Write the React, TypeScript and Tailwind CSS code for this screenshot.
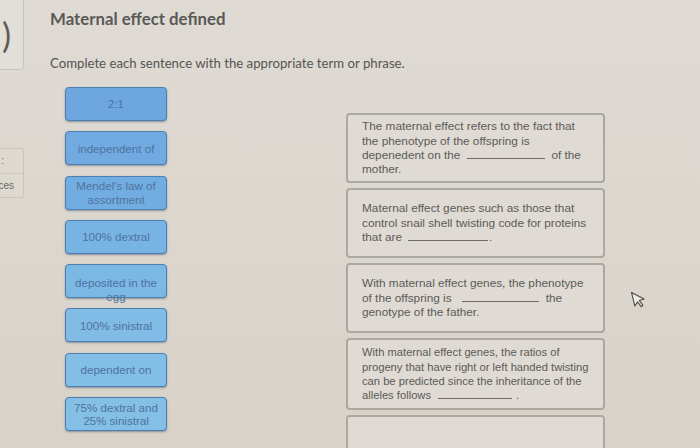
import React from "react";

const choices: { label: string; cls: string }[] = [
  { label: "2:1", cls: "bg-[#6ea7e0] items-center" },
  { label: "independent of", cls: "bg-[#70aae0] items-center" },
  { label: "Mendel's law of assortment", cls: "bg-[#72ade1] items-center" },
  { label: "100% dextral", cls: "bg-[#78b4e3] items-center" },
  { label: "deposited in the egg", cls: "bg-[#7cb8e4] items-start pt-[11px]" },
  { label: "100% sinistral", cls: "bg-[#80bce5] items-center" },
  { label: "dependent on", cls: "bg-[#82bee5] items-center" },
  { label: "75% dextral and 25% sinistral", cls: "bg-[#84bfe5] items-center" },
];

function Blank({ cls }: { cls: string }) {
  return <span className={`inline-block h-[10px] border-b border-[#6d6a66] align-baseline ${cls}`} />;
}

function Sentence({ lines, h, text = "text-[11.8px]" }: { lines: React.ReactNode[]; h: string; text?: string }) {
  return (
    <div
      className={`${h} w-[259px] shrink-0 rounded-[4px] border-2 border-[#aba7a1] bg-[#dfdad3] flex items-center pl-[14px] pr-[8px]`}
    >
      <div className={`${text} leading-[14.4px] text-[#5b5a58] flex flex-col`}>
        {lines.map((l, i) => (
          <span key={i} className="whitespace-nowrap">
            {l}
          </span>
        ))}
      </div>
    </div>
  );
}

export default function App() {
  return (
    <div className="relative w-[700px] h-[448px] overflow-hidden bg-gradient-to-b from-[#dfdbd4] to-[#d8d2c9] flex font-['Liberation_Sans',Arial,sans-serif]">
      <aside className="w-[24px] shrink-0 flex flex-col">
        <div className="h-[70px] border-r border-b border-[#c6c1b9] rounded-br-[5px] bg-[#e2ded8] overflow-hidden flex items-center justify-end pr-[12px]">
          <span className="text-[34px] leading-none text-[#5d5b58] font-['Lato',sans-serif]">)</span>
        </div>
        <div className="mt-[78px] h-[50px] border-r border-y border-[#c9c4bc] rounded-r-[3px] bg-[#ddd8d0] flex flex-col text-[10px] text-[#6b6864] overflow-hidden">
          <div className="h-[25px] border-b border-[#cdc8c0] flex items-center justify-end pr-[19px]">:</div>
          <div className="h-[24px] flex items-center justify-end pr-[9px]">
            <span>ces</span>
          </div>
        </div>
      </aside>

      <main className="ml-[26px] flex flex-col">
        <h1 className="pt-[9px] text-[16.8px] leading-[20px] font-bold text-[#5a5957] font-['Lato',sans-serif]">
          Maternal effect defined
        </h1>
        <p className="mt-[26px] text-[13.2px] leading-[16px] text-[#555452] font-['Lato',sans-serif]">
          Complete each sentence with the appropriate term or phrase.
        </p>

        <div className="flex">
          <div className="ml-[15px] mt-[16px] flex flex-col gap-[10.3px]">
            {choices.map((c) => (
              <div
                key={c.label}
                className={`w-[102px] h-[34px] rounded-[4px] border border-[#4f7eb0] shadow-[0_1px_2px_rgba(40,60,90,0.45)] flex justify-center px-[4px] text-center text-[11.6px] leading-[13.5px] text-[#4e73a0] ${c.cls}`}
              >
                <span>{c.label}</span>
              </div>
            ))}
          </div>

          <div className="ml-[179px] mt-[42px] flex flex-col gap-[5px]">
            <Sentence
              h="h-[70px]"
              lines={[
                "The maternal effect refers to the fact that",
                "the phenotype of the offspring is",
                <>
                  depenedent on the
                  <Blank cls="w-[78px] ml-[7px] mr-[6px]" />
                  of the
                </>,
                "mother.",
              ]}
            />
            <Sentence
              h="h-[70px]"
              lines={[
                "Maternal effect genes such as those that",
                "control snail shell twisting code for proteins",
                <>
                  that are
                  <Blank cls="w-[80px] ml-[6px] mr-[1px]" />.
                </>,
              ]}
            />
            <Sentence
              h="h-[70px]"
              lines={[
                "With maternal effect genes, the phenotype",
                <>
                  of the offspring is
                  <Blank cls="w-[77px] ml-[10px] mr-[7px]" />
                  the
                </>,
                "genotype of the father.",
              ]}
            />
            <Sentence
              h="h-[72px]"
              text="text-[11.2px]"
              lines={[
                "With maternal effect genes, the ratios of",
                "progeny that have right or left handed twisting",
                "can be predicted since the inheritance of the",
                <>
                  alleles follows
                  <Blank cls="w-[74px] ml-[7px] mr-[4px]" />.
                </>,
              ]}
            />
            <Sentence h="h-[70px]" lines={[]} />
          </div>
        </div>
      </main>

      <svg
        className="absolute left-[631px] top-[289px]"
        width="16"
        height="20"
        viewBox="0 0 16 20"
      >
        <path
          d="M2 2 L2.5 16 L6 12.5 L8.5 18 L10.5 17 L8 11.5 L13 11 Z"
          fill="#eeeae4"
          stroke="#4a4946"
          strokeWidth="1.1"
          strokeLinejoin="round"
          transform="rotate(-12 8 10)"
        />
      </svg>
    </div>
  );
}
